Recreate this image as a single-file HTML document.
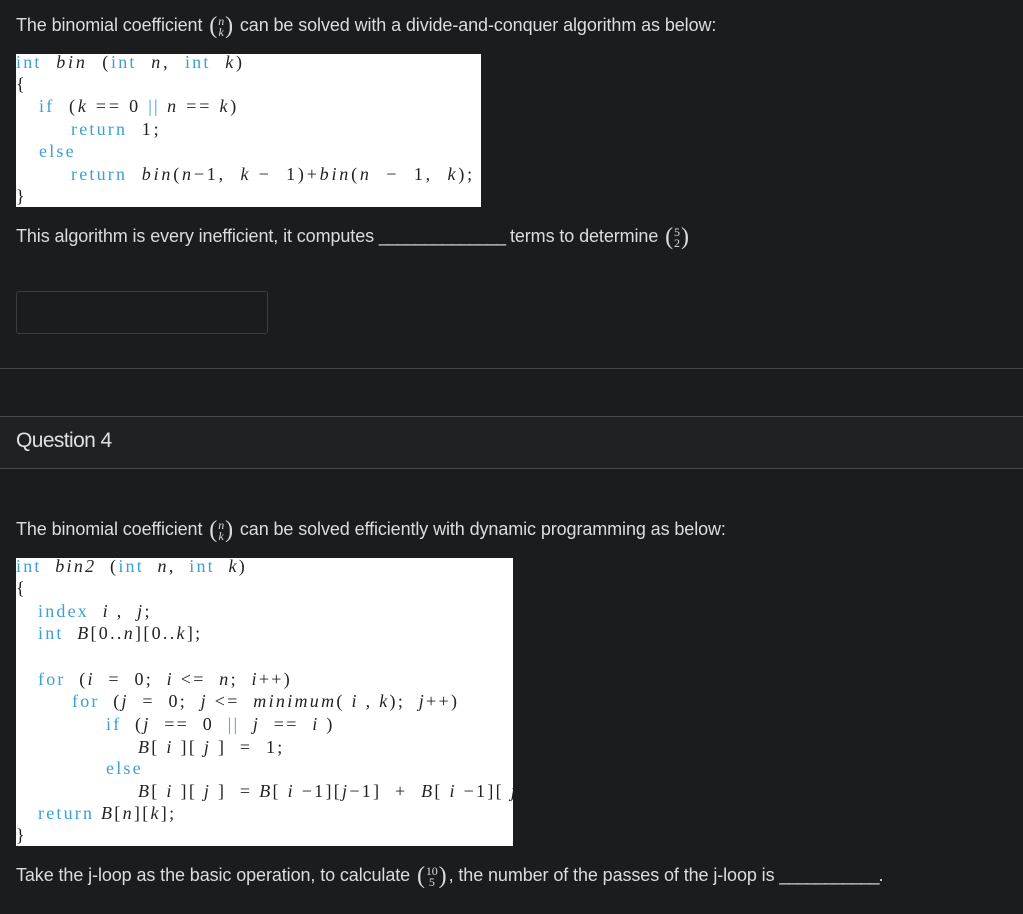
<!DOCTYPE html>
<html><head><meta charset="utf-8"><style>
body{margin:0;width:1023px;height:914px;background:#1b1c1e;position:relative;overflow:hidden;font-family:"Liberation Sans",sans-serif;color:#dcdcdc}
.t{position:absolute;font-size:18px;white-space:nowrap;line-height:20px;letter-spacing:-0.1px}
.bn{display:inline-block;position:relative;vertical-align:middle;font-family:"Liberation Serif",serif;font-size:24px;margin:0 2px;line-height:24px}
.bn .in{display:inline-block;vertical-align:middle;text-align:center;font-size:12px;line-height:11px;padding:0 1px}
.bn .in i,.bn .in span{display:block}
.code{position:absolute;background:#fff;overflow:hidden}
.l{position:absolute;font-family:"Liberation Serif",serif;font-size:18px;color:#222;white-space:pre;line-height:20px;letter-spacing:2.8px}
.c2 .l{letter-spacing:2.3px}
.k{color:#3aa0d5;letter-spacing:2.2px}
.hr{position:absolute;left:0;width:1023px;height:1px;background:#48494b}
</style></head><body>
<div class="t" style="left:16px;top:14px">The binomial coefficient <span class="bn">(<span class="in"><i>n</i><i>k</i></span>)</span> can be solved with a divide-and-conquer algorithm as below:</div>
<div class="code" style="left:16px;top:54px;width:465px;height:153px">
<div class="l" style="left:0;top:-2px"><span class="k">int</span>  <i>bin</i>  (<span class="k">int</span>  <i>n</i>,  <span class="k">int</span>  <i>k</i>)</div>
<div class="l" style="left:0;top:20px">{</div>
<div class="l" style="left:23px;top:42px"><span class="k">if</span>  (<i>k</i> == 0 <span class="k">||</span> <i>n</i> == <i>k</i>)</div>
<div class="l" style="left:55px;top:65px"><span class="k">return</span>  1;</div>
<div class="l" style="left:23px;top:87px"><span class="k">else</span></div>
<div class="l" style="left:55px;top:110px"><span class="k">return</span>  <i>bin</i>(<i>n</i>−1,  <i>k</i> −  1)+<i>bin</i>(<i>n</i>  −  1,  <i>k</i>);</div>
<div class="l" style="left:0;top:132px">}</div>
</div>
<div class="t" style="left:16px;top:225px">This algorithm is every inefficient, it computes <span style="letter-spacing:-1px">______________</span> terms to determine <span class="bn">(<span class="in"><span>5</span><span>2</span></span>)</span></div>
<div style="position:absolute;left:16px;top:291px;width:250px;height:41px;border:1px solid #3c3d40;border-radius:3px;background:#1b1c1e"></div>
<div class="hr" style="top:368px"></div>
<div style="position:absolute;left:0;top:417px;width:1023px;height:51px;background:#202124"></div>
<div class="hr" style="top:416px"></div>
<div class="hr" style="top:468px"></div>
<div class="t" style="left:16px;top:429px;font-size:21px;line-height:24px;color:#e0e0e0;letter-spacing:-0.6px">Question 4</div>
<div class="t" style="left:16px;top:518px">The binomial coefficient <span class="bn">(<span class="in"><i>n</i><i>k</i></span>)</span> can be solved efficiently with dynamic programming as below:</div>
<div class="code c2" style="left:16px;top:558px;width:497px;height:288px">
<div class="l" style="left:0;top:-2px"><span class="k">int</span>  <i>bin2</i>  (<span class="k">int</span>  <i>n</i>,  <span class="k">int</span>  <i>k</i>)</div>
<div class="l" style="left:0;top:20px">{</div>
<div class="l" style="left:22px;top:43px"><span class="k">index</span>  <i>i</i> ,  <i>j</i>;</div>
<div class="l" style="left:22px;top:65px"><span class="k">int</span>  <i>B</i>[0..<i>n</i>][0..<i>k</i>];</div>
<div class="l" style="left:22px;top:111px"><span class="k">for</span>  (<i>i</i>  =  0;  <i>i</i> &lt;=  <i>n</i>;  <i>i</i>++)</div>
<div class="l" style="left:56px;top:133px"><span class="k">for</span>  (<i>j</i>  =  0;  <i>j</i> &lt;=  <i>minimum</i>( <i>i</i> , <i>k</i>);  <i>j</i>++)</div>
<div class="l" style="left:90px;top:156px"><span class="k">if</span>  (<i>j</i>  ==  0  <span class="k">||</span>  <i>j</i>  ==  <i>i</i> )</div>
<div class="l" style="left:122px;top:179px"><i>B</i>[ <i>i</i> ][ <i>j</i> ]  =  1;</div>
<div class="l" style="left:90px;top:200px"><span class="k">else</span></div>
<div class="l" style="left:122px;top:223px"><i>B</i>[ <i>i</i> ][ <i>j</i> ]  = <i>B</i>[ <i>i</i> −1][<i>j</i>−1]  +  <i>B</i>[ <i>i</i> −1][ <i>j</i> ];</div>
<div class="l" style="left:22px;top:245px"><span class="k">return</span> <i>B</i>[<i>n</i>][<i>k</i>];</div>
<div class="l" style="left:0;top:267px">}</div>
</div>
<div class="t" style="left:16px;top:864px">Take the j-loop as the basic operation, to calculate <span class="bn">(<span class="in"><span>10</span><span>5</span></span>)</span>, the number of the passes of the j-loop is <span style="letter-spacing:-1px">___________</span>.</div>
</body></html>
